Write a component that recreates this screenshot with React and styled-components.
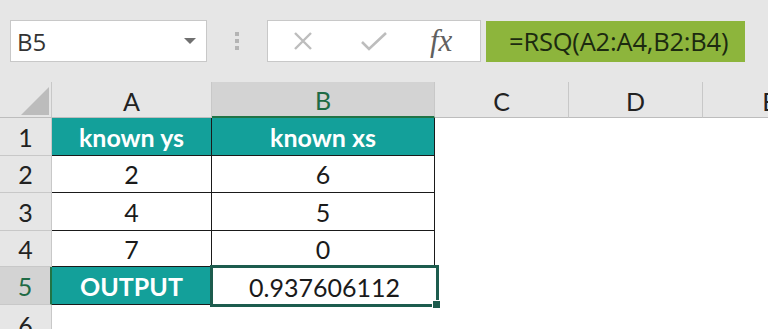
import React from 'react';
import styled, { createGlobalStyle } from 'styled-components';

const GlobalStyle = createGlobalStyle`
  html, body {
    margin: 0;
    padding: 0;
    background: #ffffff;
    overflow: hidden;
  }
  body {
    font-family: Lato, 'Open Sans', sans-serif;
  }
`;

const columns = ['A', 'B', 'C', 'D', 'E'];
const rows = [
  { n: 1, cells: ['known ys', 'known xs'], head: true },
  { n: 2, cells: ['2', '6'] },
  { n: 3, cells: ['4', '5'] },
  { n: 4, cells: ['7', '0'] },
  { n: 5, cells: ['OUTPUT', '0.937606112'], output: true },
  { n: 6, cells: [] },
];

const App = () => {
  return (
    <Page>
      <GlobalStyle />
      <Toolbar>
        <NameBox>
          <NameText>B5</NameText>
          <Caret />
        </NameBox>
        <Grip>
          <span />
          <span />
          <span />
        </Grip>
        <FormulaButtons>
          <IconSlot>
            <svg width="22" height="22" viewBox="0 0 22 22">
              <path d="M3 3 L19 19 M19 3 L3 19" stroke="#bdbdbd" strokeWidth="2.4" fill="none" />
            </svg>
          </IconSlot>
          <IconSlot>
            <svg width="28" height="22" viewBox="0 0 28 22">
              <path d="M2 12 L9 19 L26 3" stroke="#bdbdbd" strokeWidth="2.6" fill="none" />
            </svg>
          </IconSlot>
          <Fx>fx</Fx>
        </FormulaButtons>
        <FormulaBar>=RSQ(A2:A4,B2:B4)</FormulaBar>
      </Toolbar>

      <Sheet>
        <Corner>
          <svg width="30" height="30" viewBox="0 0 30 30">
            <polygon points="30,2 30,30 2,30" fill="#bcbcbc" />
          </svg>
        </Corner>
        {columns.map((c) => (
          <ColHead key={c} $active={c === 'B'}>
            {c}
          </ColHead>
        ))}

        {rows.map((r) => (
          <React.Fragment key={r.n}>
            <RowHead $active={r.n === 5}>{r.n}</RowHead>
            {r.cells.length ? (
              <>
                <Cell $fill={r.head || r.output} $bold={r.head || r.output}>
                  {r.cells[0]}
                </Cell>
                <Cell $fill={r.head} $bold={r.head} $selected={r.output}>
                  {r.cells[1]}
                  {r.output && <FillHandle />}
                </Cell>
              </>
            ) : (
              <>
                <Blank />
                <Blank />
              </>
            )}
            <Blank />
            <Blank />
            <Blank />
          </React.Fragment>
        ))}
      </Sheet>
    </Page>
  );
};

const Page = styled.div`
  width: 768px;
  height: 329px;
  overflow: hidden;
  background: #ffffff;
`;

const Toolbar = styled.div`
  height: 82px;
  background: #e6e6e6;
  display: flex;
  align-items: center;
  padding: 0 0 0 10px;
  box-sizing: border-box;
`;

const NameBox = styled.div`
  width: 197px;
  height: 42px;
  box-sizing: border-box;
  background: #ffffff;
  border: 1px solid #c8c8c8;
  display: flex;
  align-items: center;
  justify-content: space-between;
  padding: 0 10px 0 6px;
`;

const NameText = styled.span`
  font-family: 'Open Sans', sans-serif;
  font-size: 24px;
  color: #333333;
`;

const Caret = styled.span`
  width: 0;
  height: 0;
  border-left: 6px solid transparent;
  border-right: 6px solid transparent;
  border-top: 6px solid #707070;
`;

const Grip = styled.div`
  width: 60px;
  display: flex;
  flex-direction: column;
  align-items: center;
  gap: 3px;

  span {
    width: 4px;
    height: 4px;
    background: #b4b4b4;
  }
`;

const FormulaButtons = styled.div`
  width: 214px;
  height: 42px;
  box-sizing: border-box;
  background: #ffffff;
  border: 1px solid #c8c8c8;
  display: flex;
  align-items: center;
  padding-left: 24px;
  gap: 46px;
`;

const IconSlot = styled.span`
  display: flex;
  align-items: center;
`;

const Fx = styled.span`
  font-family: 'Liberation Serif', 'DejaVu Serif', serif;
  font-style: italic;
  font-size: 31px;
  color: #606060;
  margin-left: -4px;
`;

const FormulaBar = styled.div`
  margin-left: 5px;
  width: 259px;
  height: 41px;
  box-sizing: border-box;
  background: #8db53c;
  display: flex;
  align-items: center;
  padding-left: 23px;
  font-family: 'Open Sans', sans-serif;
  font-size: 25.5px;
  letter-spacing: -0.2px;
  color: #1c2a10;
  white-space: nowrap;
  overflow: hidden;
`;

const Sheet = styled.div`
  display: grid;
  grid-template-columns: 52px 160px 223px 134px 134px 134px;
  grid-template-rows: 36px 38px 37px 38px 36px 38px 40px;
  font-size: 25px;
  color: #1a1a1a;
`;

const Corner = styled.div`
  background: #e6e6e6;
  border-right: 1px solid #c8c8c8;
  border-bottom: 1px solid #bdbdbd;
  display: flex;
  align-items: flex-end;
  justify-content: flex-end;
  padding: 0 2px 2px 0;
  box-sizing: border-box;
`;

const ColHead = styled.div`
  background: ${(p) => (p.$active ? '#d3d3d3' : '#e6e6e6')};
  color: ${(p) => (p.$active ? '#1f6b45' : '#222222')};
  border-right: 1px solid #c8c8c8;
  border-bottom: ${(p) => (p.$active ? '2px solid #217346' : '1px solid #bdbdbd')};
  display: flex;
  align-items: center;
  justify-content: center;
  box-sizing: border-box;
  padding-top: 2px;
`;

const RowHead = styled.div`
  background: ${(p) => (p.$active ? '#d3d3d3' : '#e6e6e6')};
  color: ${(p) => (p.$active ? '#1f6b45' : '#222222')};
  border-right: ${(p) => (p.$active ? '2px solid #217346' : '1px solid #c8c8c8')};
  border-bottom: 1px solid #c8c8c8;
  display: flex;
  align-items: center;
  justify-content: center;
  box-sizing: border-box;
`;

const Cell = styled.div`
  position: relative;
  background: ${(p) => (p.$fill ? '#13a09a' : '#ffffff')};
  color: ${(p) => (p.$fill ? '#ffffff' : '#1a1a1a')};
  font-weight: ${(p) => (p.$bold ? 700 : 400)};
  border-right: 1px solid #1a1a1a;
  border-bottom: 1px solid #1a1a1a;
  display: flex;
  align-items: center;
  justify-content: center;
  box-sizing: border-box;
  ${(p) =>
    p.$selected &&
    `
    background: #ffffff;
    border: 3px solid #1d5c4e;
    margin: -2px -4px -2px -2px;
    padding-top: 1px;
    z-index: 1;
  `}
`;

const FillHandle = styled.span`
  position: absolute;
  right: -5px;
  bottom: -5px;
  width: 7px;
  height: 7px;
  background: #1d5c4e;
  border: 1px solid #ffffff;
`;

const Blank = styled.div`
  background: #ffffff;
`;

export default App;
